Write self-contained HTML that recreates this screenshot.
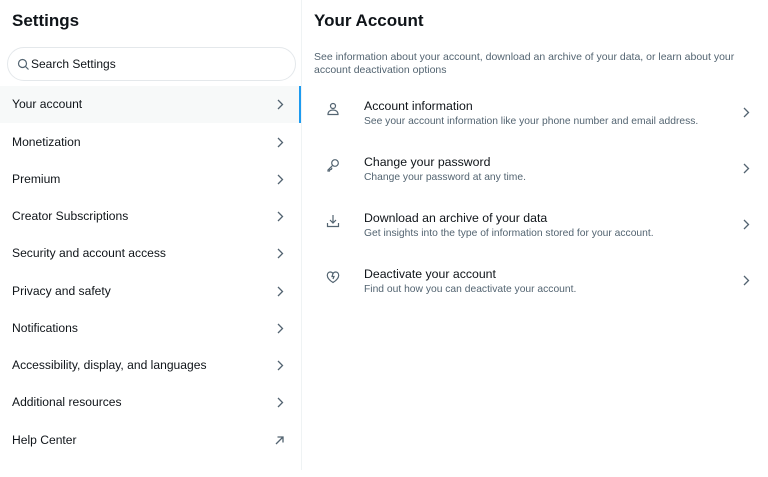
<!DOCTYPE html>
<html><head><meta charset="utf-8"><style>
*{margin:0;padding:0;box-sizing:border-box}
body{width:768px;height:477px;background:#fff;font-family:"Liberation Sans",sans-serif;color:#0f1419;position:relative;overflow:hidden}
.abs{position:absolute}
h1{position:absolute;font-size:17px;font-weight:bold}
.search{position:absolute;left:7px;top:47px;width:289px;height:34px;border:1px solid #e4e8eb;border-radius:17px;font-size:12px;color:#0f1419}
.item{position:absolute;left:0;width:300px;height:37px;font-size:12.1px;line-height:37px;padding-left:12px}
.chev{position:absolute;right:16px;top:13px}
.divider{position:absolute;left:301px;top:0;width:1px;height:470px;background:#eff3f4}
.r{position:absolute;left:305px;width:463px;height:56px}
.r .t{position:absolute;left:59px;top:0;font-size:12.3px}
.r .s{position:absolute;left:59px;top:17px;font-size:10.3px;color:#536471}
.r .ic{position:absolute;left:21px;top:3px}
.r .ch{position:absolute;left:437px;top:8px}
</style></head><body>
<h1 style="left:12px;top:11px">Settings</h1>
<div class="search"><svg class="abs" style="left:9px;top:10px" width="13" height="13" viewBox="0 0 13 13" fill="none" stroke="#536471" stroke-width="1.2"><circle cx="5.5" cy="5.5" r="4"/><path d="M8.5 8.5l3 3"/></svg><span class="abs" style="left:23px;top:9px">Search Settings</span></div>
<div class="item" style="top:86px;background:#f7f9f9">Your account<svg class="chev" width="8" height="11" viewBox="0 0 8 11" fill="none" stroke="#536471" stroke-width="1.3"><path d="M2 1l4.5 4.5L2 10"/></svg></div>
<div class="abs" style="left:299px;top:86px;width:2px;height:37px;background:#1d9bf0"></div>
<div class="item" style="top:123.5px">Monetization<svg class="chev" width="8" height="11" viewBox="0 0 8 11" fill="none" stroke="#536471" stroke-width="1.3"><path d="M2 1l4.5 4.5L2 10"/></svg></div>
<div class="item" style="top:161px">Premium<svg class="chev" width="8" height="11" viewBox="0 0 8 11" fill="none" stroke="#536471" stroke-width="1.3"><path d="M2 1l4.5 4.5L2 10"/></svg></div>
<div class="item" style="top:198px">Creator Subscriptions<svg class="chev" width="8" height="11" viewBox="0 0 8 11" fill="none" stroke="#536471" stroke-width="1.3"><path d="M2 1l4.5 4.5L2 10"/></svg></div>
<div class="item" style="top:235px">Security and account access<svg class="chev" width="8" height="11" viewBox="0 0 8 11" fill="none" stroke="#536471" stroke-width="1.3"><path d="M2 1l4.5 4.5L2 10"/></svg></div>
<div class="item" style="top:272.5px">Privacy and safety<svg class="chev" width="8" height="11" viewBox="0 0 8 11" fill="none" stroke="#536471" stroke-width="1.3"><path d="M2 1l4.5 4.5L2 10"/></svg></div>
<div class="item" style="top:309.5px">Notifications<svg class="chev" width="8" height="11" viewBox="0 0 8 11" fill="none" stroke="#536471" stroke-width="1.3"><path d="M2 1l4.5 4.5L2 10"/></svg></div>
<div class="item" style="top:347px">Accessibility, display, and languages<svg class="chev" width="8" height="11" viewBox="0 0 8 11" fill="none" stroke="#536471" stroke-width="1.3"><path d="M2 1l4.5 4.5L2 10"/></svg></div>
<div class="item" style="top:384px">Additional resources<svg class="chev" width="8" height="11" viewBox="0 0 8 11" fill="none" stroke="#536471" stroke-width="1.3"><path d="M2 1l4.5 4.5L2 10"/></svg></div>
<div class="item" style="top:421.5px">Help Center<svg class="chev" style="right:15px" width="11" height="11" viewBox="0 0 11 11" fill="none" stroke="#536471" stroke-width="1.3"><path d="M2 9l7-7M3.5 2H9v5.5"/></svg></div>
<div class="divider"></div>
<h1 style="left:314px;top:11px">Your Account</h1>
<div class="abs" style="left:314px;top:51px;width:440px;font-size:10.5px;line-height:13px;color:#536471">See information about your account, download an archive of your data, or learn about your account deactivation options</div>
<div class="r" style="top:99px"><svg class="ic" width="14" height="14" viewBox="0 0 14 14" fill="none" stroke="#536471" stroke-width="1.2"><circle cx="7" cy="4" r="2.5"/><path d="M2 12.5c0-3 2.2-4.5 5-4.5s5 1.5 5 4.5z"/></svg><div class="t">Account information</div><div class="s">See your account information like your phone number and email address.</div><svg class="ch" width="8" height="11" viewBox="0 0 8 11" fill="none" stroke="#536471" stroke-width="1.3"><path d="M2 1l4.5 4.5L2 10"/></svg></div>
<div class="r" style="top:155px"><svg class="ic" width="14" height="14" viewBox="0 0 14 14" fill="none" stroke="#536471" stroke-width="1.2"><circle cx="9" cy="5" r="3.3"/><path d="M6.5 7.5L2 12v1h1.5l.5-1.5 1.5-.3.4-1.5"/></svg><div class="t">Change your password</div><div class="s">Change your password at any time.</div><svg class="ch" width="8" height="11" viewBox="0 0 8 11" fill="none" stroke="#536471" stroke-width="1.3"><path d="M2 1l4.5 4.5L2 10"/></svg></div>
<div class="r" style="top:211px"><svg class="ic" width="14" height="14" viewBox="0 0 14 14" fill="none" stroke="#536471" stroke-width="1.2"><path d="M7 1v8M4 6l3 3 3-3M1.5 9v3.5h11V9"/></svg><div class="t">Download an archive of your data</div><div class="s">Get insights into the type of information stored for your account.</div><svg class="ch" width="8" height="11" viewBox="0 0 8 11" fill="none" stroke="#536471" stroke-width="1.3"><path d="M2 1l4.5 4.5L2 10"/></svg></div>
<div class="r" style="top:267px"><svg class="ic" width="14" height="14" viewBox="0 0 14 14" fill="none" stroke="#536471" stroke-width="1.2"><path d="M7 12.5C3 10 1.3 7.5 1.3 5.2 1.3 3.3 2.7 2 4.3 2c1.2 0 2.1.6 2.7 1.5C7.6 2.6 8.5 2 9.7 2c1.6 0 3 1.3 3 3.2 0 2.3-1.7 4.8-5.7 7.3zM7 3.5L6 6.5h2L7 9"/></svg><div class="t">Deactivate your account</div><div class="s">Find out how you can deactivate your account.</div><svg class="ch" width="8" height="11" viewBox="0 0 8 11" fill="none" stroke="#536471" stroke-width="1.3"><path d="M2 1l4.5 4.5L2 10"/></svg></div>
</body></html>
